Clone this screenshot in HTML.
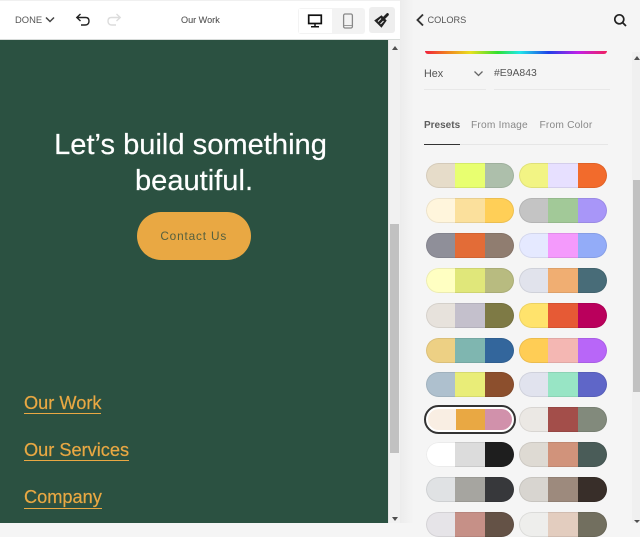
<!DOCTYPE html>
<html><head><meta charset="utf-8"><style>
html,body{margin:0;padding:0;width:640px;height:523px;overflow:hidden;background:#f5f5f5;font-family:"Liberation Sans",sans-serif}
.a{position:absolute}
.p{position:absolute;width:88px;height:25px;border-radius:13px;overflow:hidden;display:flex}
.p i{display:block;height:100%;flex:1 1 0}
.p::after{content:"";position:absolute;inset:0;border-radius:13px;box-shadow:inset 0 0 0 1px rgba(0,0,0,.08)}
.l{position:absolute;left:24px;color:#e9a843;font-size:18.2px;line-height:22px;border-bottom:1px solid #e9a843;white-space:nowrap;height:21.5px;-webkit-text-stroke:.2px #e9a843}
</style></head><body>
<div class="a" style="left:0;top:0;width:400px;height:40px;background:#fff"></div>
<div class="a" style="left:0;top:0;width:400px;height:1px;background:#f0f0f0"></div>
<div class="a" style="left:0;top:39px;width:400px;height:1px;background:#d8dcda"></div>
<div class="a" style="left:15px;top:14px;font-size:9.4px;line-height:12px;color:#555;">DONE</div>
<svg class="a" style="left:44px;top:14px" width="12" height="12" viewBox="0 0 12 12"><path d="M2 3.5L6 7.5L10 3.5" fill="none" stroke="#444" stroke-width="1.5"/></svg>
<svg class="a" style="left:75px;top:12px" width="16" height="16" viewBox="0 0 16 16"><path d="M5.5 2L1.8 5.5L5.500 9M2 5.5H10.5C13 5.500 14 7 14 9C14 11 13 13 10 13H6" fill="none" stroke="#222" stroke-width="1.400"/></svg>
<svg class="a" style="left:106px;top:12px;transform:scaleX(-1)" width="16" height="16" viewBox="0 0 16 16"><path d="M5.5 2L1.8 5.5L5.500 9M2 5.5H10.5C13 5.500 14 7 14 9C14 11 13 13 10 13H6" fill="none" stroke="#dcdcdc" stroke-width="1.400"/></svg>
<div class="a" style="left:181px;top:14px;font-size:9.100px;line-height:12px;color:#555;-webkit-text-stroke:.1px #555">Our Work</div>
<div class="a" style="left:298px;top:8px;width:67px;height:26px;background:#f3f3f3;border-radius:3px"></div>
<div class="a" style="left:299px;top:9px;width:33px;height:24px;background:#fff"></div>
<svg class="a" style="left:307px;top:14px" width="16" height="14" viewBox="0 0 16 14"><rect x="1.700" y="1.200" width="12.600" height="8.300" fill="none" stroke="#111" stroke-width="1.700"/><path d="M8 10v2.300M4 12.700h8" stroke="#111" stroke-width="1.500"/></svg>
<svg class="a" style="left:342px;top:13px" width="12" height="16" viewBox="0 0 12 16"><rect x="1.600" y="1" width="8.800" height="14" rx="1.500" fill="none" stroke="#888" stroke-width="1.300"/><path d="M2 12.500h8" stroke="#999"/></svg>
<div class="a" style="left:369px;top:7px;width:26px;height:26px;background:#eee;border-radius:3px"></div>
<svg class="a" style="left:373px;top:12px" width="17" height="17" viewBox="0 0 17 17"><path d="M9.500 5.500L13.500 1.500Q14.500 .6 15.500 1.500Q16.400 2.500 15.500 3.500L11.500 7.500Z" fill="#222"/><path d="M8.500 3.300L13.700 8.500L8.500 15.800L1.200 8.500Z" fill="#222"/><path d="M5 9.500L8 6.500M7.500 12L10.500 9" stroke="#eee" stroke-width="1.100"/></svg>

<div class="a" style="left:0;top:40px;width:388px;height:483px;background:#2b5141"></div>
<div class="a" style="left:0;top:127px;width:388px;text-align:center;color:#fff;font-size:29.100px;line-height:36px;-webkit-text-stroke:.2px #fff"><span style="position:relative;left:-3.500px">Let’s build something</span><br>beautiful.</div>
<div class="a" style="left:136.500px;top:212px;width:114.500px;height:48px;border-radius:24px;background:#e9a843;color:#54603f;font-size:11.800px;line-height:48px;text-align:center;letter-spacing:.85px">Contact Us</div>
<div class="l" style="top:391.500px">Our Work</div>
<div class="l" style="top:438.500px">Our Services</div>
<div class="l" style="top:486px">Company</div>

<div class="a" style="left:388px;top:40px;width:12px;height:483px;background:#f1f1f1;border-left:1px solid #e6e6e6;box-sizing:border-box"></div>
<div class="a" style="left:390px;top:224px;width:9px;height:229px;background:#c1c1c1"></div>
<div class="a" style="left:391.500px;top:46px;border:3px solid transparent;border-top:0;border-bottom:4px solid #505050"></div>
<div class="a" style="left:391.500px;top:517px;border:3px solid transparent;border-bottom:0;border-top:4px solid #505050"></div>
<div class="a" style="left:400px;top:0;width:14px;height:523px;background:linear-gradient(90deg,#ececec,#f5f5f5)"></div>

<svg class="a" style="left:415px;top:13px" width="10" height="14" viewBox="0 0 10 14"><path d="M8 1.500L2.500 7L8 12.500" fill="none" stroke="#333" stroke-width="1.900"/></svg>
<div class="a" style="left:427.500px;top:14px;font-size:9.200px;line-height:12px;color:#555;">COLORS</div>
<svg class="a" style="left:613px;top:13px" width="14" height="14" viewBox="0 0 14 14"><circle cx="6.300" cy="6.300" r="4.500" fill="none" stroke="#222" stroke-width="1.700"/><path d="M9.500 9.500L13 13" stroke="#222" stroke-width="1.800"/></svg>

<div class="a" style="left:425px;top:51px;width:182px;height:3px;border-radius:0 0 8px 8px;background:linear-gradient(90deg,#f0203c 0%,#f08020 12%,#e8e020 25%,#30e030 40%,#20e8e8 52%,#2040e8 68%,#c020e8 84%,#f02060 100%)"></div>
<div class="a" style="left:424px;top:67px;font-size:10.800px;line-height:14px;color:#555">Hex</div>
<svg class="a" style="left:473px;top:69px" width="11" height="10" viewBox="0 0 11 10"><path d="M1.500 2.500L5.500 6.500L9.500 2.500" fill="none" stroke="#666" stroke-width="1.300"/></svg>
<div class="a" style="left:424px;top:89px;width:62px;height:1px;background:#e8e8e8"></div>
<div class="a" style="left:494px;top:67px;font-size:10.400px;line-height:14px;color:#555">#E9A843</div>
<div class="a" style="left:494px;top:89px;width:116px;height:1px;background:#e8e8e8"></div>

<div class="a" style="left:424px;top:119px;font-size:10px;line-height:13px;color:#444;font-weight:bold;opacity:.85">Presets</div>
<div class="a" style="left:471px;top:119px;font-size:10.200px;line-height:13px;color:#888;letter-spacing:.2px">From Image</div>
<div class="a" style="left:539.500px;top:119px;font-size:10.200px;line-height:13px;color:#888;letter-spacing:.2px">From Color</div>
<div class="a" style="left:424px;top:144px;width:184px;height:1px;background:#e6e6e6"></div>
<div class="a" style="left:424px;top:143.500px;width:36px;height:1.500px;background:#333"></div>

<div class="p" style="left:426px;top:163px"><i style="background:#e6dcc9"></i><i style="background:#e8ff70"></i><i style="background:#adbfab"></i></div>
<div class="p" style="left:519px;top:163px"><i style="background:#f2f484"></i><i style="background:#e7e0ff"></i><i style="background:#f26b2c"></i></div>
<div class="p" style="left:426px;top:198px"><i style="background:#fff5dc"></i><i style="background:#fbe09c"></i><i style="background:#ffcf57"></i></div>
<div class="p" style="left:519px;top:198px"><i style="background:#c4c4c4"></i><i style="background:#a2c998"></i><i style="background:#a896f8"></i></div>
<div class="p" style="left:426px;top:233px"><i style="background:#8f8f99"></i><i style="background:#e36c37"></i><i style="background:#907d70"></i></div>
<div class="p" style="left:519px;top:233px"><i style="background:#e5e9ff"></i><i style="background:#f49afc"></i><i style="background:#93acf8"></i></div>
<div class="p" style="left:426px;top:268px"><i style="background:#ffffc2"></i><i style="background:#e0e77a"></i><i style="background:#b8bb80"></i></div>
<div class="p" style="left:519px;top:268px"><i style="background:#e1e3ec"></i><i style="background:#f0ae72"></i><i style="background:#486c78"></i></div>
<div class="p" style="left:426px;top:303px"><i style="background:#e7e2dc"></i><i style="background:#c4c0cc"></i><i style="background:#7e7a45"></i></div>
<div class="p" style="left:519px;top:303px"><i style="background:#ffe36c"></i><i style="background:#e65a35"></i><i style="background:#ba005c"></i></div>
<div class="p" style="left:426px;top:337.500px"><i style="background:#edd084"></i><i style="background:#7fb6b0"></i><i style="background:#33669c"></i></div>
<div class="p" style="left:519px;top:337.500px"><i style="background:#ffcd55"></i><i style="background:#f4b7b3"></i><i style="background:#b866f8"></i></div>
<div class="p" style="left:426px;top:372px"><i style="background:#aec0ce"></i><i style="background:#e9ed78"></i><i style="background:#8c4f2d"></i></div>
<div class="p" style="left:519px;top:372px"><i style="background:#e1e3ee"></i><i style="background:#98e5c5"></i><i style="background:#5f66c8"></i></div>

<div class="a" style="left:424px;top:405px;width:92px;height:29px;box-sizing:border-box;border:2px solid #333;border-radius:15px;background:#fff"></div>
<div class="a" style="left:428px;top:409px;width:84px;height:21px;border-radius:11px;overflow:hidden;display:flex"><i style="width:27.500px;background:#f9eee3"></i><i style="width:29.500px;background:#e9a843"></i><i style="width:27px;background:#d191ab"></i></div>
<div class="p" style="left:519px;top:407px"><i style="background:#ebe8e4"></i><i style="background:#a34e4a"></i><i style="background:#828a7c"></i></div>
<div class="p" style="left:426px;top:442px"><i style="background:#fff"></i><i style="background:#dcdcdc"></i><i style="background:#1e1e1e"></i></div>
<div class="p" style="left:519px;top:442px"><i style="background:#dedad3"></i><i style="background:#d1937b"></i><i style="background:#4a5c58"></i></div>
<div class="p" style="left:426px;top:477px"><i style="background:#e0e2e4"></i><i style="background:#a6a5a0"></i><i style="background:#37383b"></i></div>
<div class="p" style="left:519px;top:477px"><i style="background:#d8d5d0"></i><i style="background:#9d8a7d"></i><i style="background:#382e29"></i></div>
<div class="p" style="left:426px;top:512px"><i style="background:#e6e4e8"></i><i style="background:#c69087"></i><i style="background:#645246"></i></div>
<div class="p" style="left:519px;top:512px"><i style="background:#eeeeec"></i><i style="background:#e3cdbf"></i><i style="background:#726f5f"></i></div>

<div class="a" style="left:632px;top:52px;width:8px;height:471px;background:#f0f0f0"></div>
<div class="a" style="left:633px;top:180px;width:7px;height:212px;background:#c1c1c1"></div>
<div class="a" style="left:634px;top:56px;border:3px solid transparent;border-top:0;border-bottom:4px solid #505050"></div>
<div class="a" style="left:634px;top:520px;border:3px solid transparent;border-bottom:0;border-top:3px solid #505050"></div>
</body></html>
